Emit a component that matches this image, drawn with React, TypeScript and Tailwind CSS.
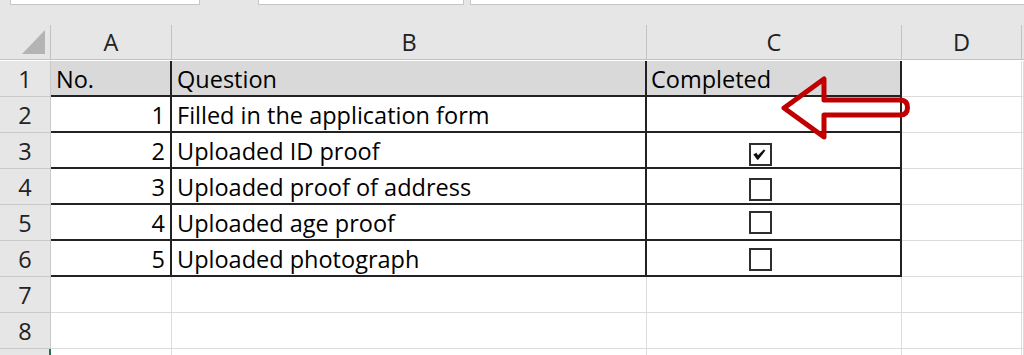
import React from 'react';

type Row = {
  n: number;
  a: string;
  b: string;
  check?: boolean;
  boxClass?: string;
};

const rows: Row[] = [
  { n: 2, a: '1', b: 'Filled in the application form' },
  { n: 3, a: '2', b: 'Uploaded ID proof', check: true, boxClass: 'mt-[10px]' },
  { n: 4, a: '3', b: 'Uploaded proof of address', check: false, boxClass: 'mt-[9px]' },
  { n: 5, a: '4', b: 'Uploaded age proof', check: false, boxClass: 'mt-[6px]' },
  { n: 6, a: '5', b: 'Uploaded photograph', check: false, boxClass: 'mt-[7px]' },
];

const rowHead = 'h-[36px] bg-[#e6e6e6] border-r border-b border-[#c9c9c9] flex items-center justify-center text-[#222]';
const emptyCell = 'h-[36px] border-r border-b border-[#dcdcdc]';
const colHead = 'h-[35px] bg-[#e6e6e6] border-r border-b border-[#c2c2c2] text-center leading-[35px] text-[#222]';

function CheckBox({ checked, className }: { checked: boolean; className?: string }) {
  return (
    <div className={'ml-[102px] w-[23px] h-[23px] border-2 border-[#2e2e2e] bg-white flex items-center justify-start pl-[2px] ' + (className ?? '')}>
      {checked && (
        <svg width="13" height="11" viewBox="0 0 13 11">
          <path d="M0.3 5.6 L3.4 3.8 L5 6.3 L10.8 0.4 L12.4 1.6 L5.2 10.8 L4.2 10.8 Z" fill="#111" />
        </svg>
      )}
    </div>
  );
}

export default function App() {
  return (
    <div className="relative w-[1024px] h-[355px] overflow-hidden bg-white text-[23.5px] text-black" style={{ fontFamily: '"Open Sans", "Noto Sans", sans-serif' }}>
      {/* formula bar strip */}
      <div className="h-[25px] bg-[#e6e6e6] flex items-start">
        <div className="ml-[10px] w-[190px] h-[5px] bg-white border-x border-b border-[#c6c6c6]" />
        <div className="ml-[58px] w-[206px] h-[5px] bg-white border-x border-b border-[#c6c6c6]" />
        <div className="ml-[6px] flex-1 h-[5px] bg-white border-l border-b border-[#c6c6c6]" />
      </div>

      <div className="grid grid-cols-[51px_121px_475px_255px_120px_1fr] auto-rows-[36px] leading-[36px]">
        {/* column headers */}
        <div className="h-[35px] bg-[#e6e6e6] border-r border-b border-[#c2c2c2] relative">
          <svg className="absolute left-[22px] top-[5px]" width="24" height="25" viewBox="0 0 24 25">
            <path d="M23 0 L23 24 L0 24 Z" fill="#b4b4b4" />
          </svg>
        </div>
        <div className={colHead}>A</div>
        <div className={colHead}>B</div>
        <div className={colHead}>C</div>
        <div className={colHead}>D</div>
        <div className="h-[35px] bg-[#e6e6e6] border-b border-[#c2c2c2]" />

        {/* row 1: table header */}
        <div className={rowHead}>1</div>
        <div className="h-[36px] bg-[#d9d9d9] border-r-2 border-b-2 border-[#222] pl-[5px]">No.</div>
        <div className="h-[36px] bg-[#d9d9d9] border-r-2 border-b-2 border-[#222] pl-[5px]">Question</div>
        <div className="h-[36px] bg-[#d9d9d9] border-r-2 border-b-2 border-[#222] pl-[4px]">Completed</div>
        <div className={emptyCell} />
        <div className={emptyCell} />

        {rows.map((r) => (
          <React.Fragment key={r.n}>
            <div className={rowHead}>{r.n}</div>
            <div className="h-[36px] border-r-2 border-b-2 border-[#222] text-right pr-[5px]">{r.a}</div>
            <div className="h-[36px] border-r-2 border-b-2 border-[#222] pl-[5px] whitespace-nowrap">{r.b}</div>
            <div className="h-[36px] border-r-2 border-b-2 border-[#222] flex items-start">
              {r.check !== undefined && <CheckBox checked={r.check} className={r.boxClass} />}
            </div>
            <div className={emptyCell} />
            <div className={emptyCell} />
          </React.Fragment>
        ))}

        {[7, 8].map((n) => (
          <React.Fragment key={n}>
            <div className={rowHead}>{n}</div>
            <div className={emptyCell} />
            <div className={emptyCell} />
            <div className={emptyCell} />
            <div className={emptyCell} />
            <div className={emptyCell} />
          </React.Fragment>
        ))}

        <div className="h-[36px] bg-[#e6e6e6] border-r-2 border-[#217346]" />
        <div className={emptyCell} />
        <div className={emptyCell} />
        <div className={emptyCell} />
        <div className={emptyCell} />
        <div className={emptyCell} />
      </div>

      {/* red arrow callout */}
      <svg className="absolute left-0 top-0 pointer-events-none" width="1024" height="355" viewBox="0 0 1024 355">
        <path
          d="M784 108 L824 79 L824 100 L900 100 Q907.5 100 907.5 107.5 Q907.5 115 900 115 L824 115 L824 137 Z"
          fill="none"
          stroke="#c00000"
          strokeWidth="5"
          strokeLinejoin="round"
        />
      </svg>
    </div>
  );
}
